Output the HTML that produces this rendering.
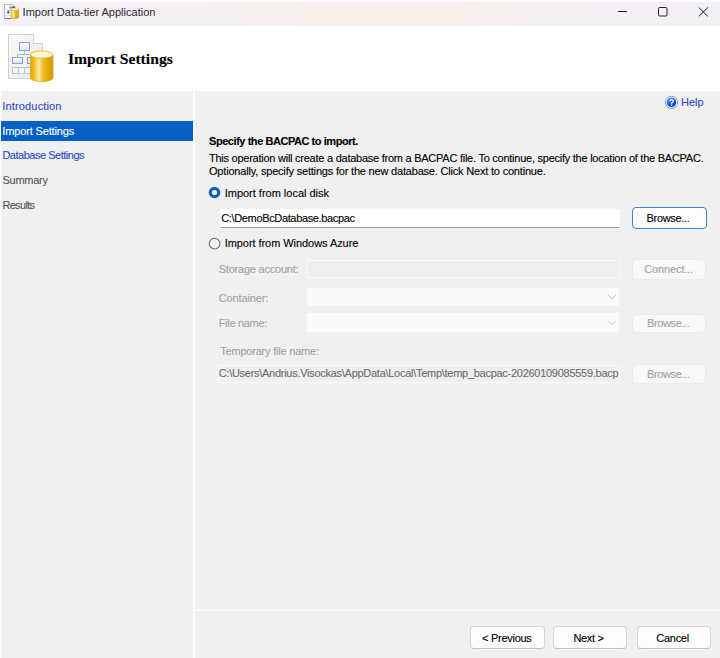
<!DOCTYPE html>
<html><head><meta charset="utf-8">
<style>
*{margin:0;padding:0;box-sizing:border-box}
html,body{width:720px;height:658px;overflow:hidden;background:#fff}
body{position:relative;font-family:"Liberation Sans",sans-serif;font-size:11px;color:#000}
.a{position:absolute;white-space:nowrap;line-height:11px;-webkit-text-stroke:0.12px currentColor}
#titlebar{position:absolute;left:1px;top:2px;width:719px;height:24px;background:linear-gradient(90deg,#f3f0f7 0%,#f4f0f5 20%,#f8efea 45%,#f8efea 62%,#f4eff6 85%,#f3eff7 100%)}
#header{position:absolute;left:1px;top:26px;width:719px;height:65px;background:#fff}
#main{position:absolute;left:1px;top:91px;width:719px;height:567px;background:#f0f0f0;border-left:1px solid #f5f5f5}
#vsep{position:absolute;left:193px;top:91px;width:2px;height:567px;background:#fcfcfc}
#hsep{position:absolute;left:195px;top:609px;width:525px;height:2px;background:#f9f9f9}
#sel{position:absolute;left:1px;top:121px;width:192px;height:20px;background:#0560c6}
.btn{position:absolute;background:#fdfdfd;border:1px solid #d4d4d4;border-bottom-color:#c2c2c2;border-radius:4px}
.btnd{position:absolute;background:#f8f8f8;border:1px solid #ebebeb;border-radius:4px}
.tbx{position:absolute;background:#efefef;border:1px solid #fafafa}
.cmb{position:absolute;background:#fafafa}
</style></head><body>
<div id="titlebar"></div>
<div id="header"></div>
<div id="main"></div>
<div id="vsep"></div>
<div id="hsep"></div>
<div id="sel"></div>

<div class="tbx" style="left:220px;top:209px;width:400px;height:19px;background:#fff;border:none;border-radius:2px;border-bottom:1px solid #9a9a9a"></div>
<div class="btn" style="left:632px;top:207px;width:75px;height:22px;border:1.5px solid #3c84d8"></div>
<div class="tbx" style="left:307px;top:260px;width:313px;height:18px"></div>
<div class="btnd" style="left:632px;top:259px;width:74px;height:21px"></div>
<div class="cmb" style="left:307px;top:288px;width:312px;height:18px"></div>
<div class="cmb" style="left:307px;top:313px;width:312px;height:19px"></div>
<div class="btnd" style="left:632px;top:314px;width:74px;height:19px"></div>
<div class="tbx" style="left:218px;top:365px;width:402px;height:18px"></div>
<div class="btnd" style="left:632px;top:364px;width:74px;height:20px"></div>
<div class="btn" style="left:470px;top:626px;width:75px;height:23px"></div>
<div class="btn" style="left:553px;top:626px;width:74px;height:23px"></div>
<div class="btn" style="left:637px;top:626px;width:74px;height:23px"></div>


<!-- title icon -->
<svg style="position:absolute;left:0;top:0" width="24" height="24" viewBox="0 0 24 24">
 <defs>
  <linearGradient id="gs" x1="0" x2="1" y1="0" y2="0">
   <stop offset="0" stop-color="#e8c030"/><stop offset="0.3" stop-color="#f8eaa0"/><stop offset="0.5" stop-color="#f0c030"/><stop offset="1" stop-color="#d89800"/>
  </linearGradient>
 </defs>
 <path d="M4.5 4.5 H12.5 L15 7 V18.5 H4.5 Z" fill="#f4f6fa" stroke="#a8b4cc" stroke-width="1"/>
 <path d="M4.5 18.5 H11" stroke="#6a78a0" stroke-width="1"/>
 <rect x="6" y="6" width="3" height="5" fill="#ffffff"/>
 <path d="M7 10.3 H10.5" stroke="#8090c0" stroke-width="0.8"/>
 <circle cx="8.3" cy="12.4" r="1.1" fill="#2a3860"/>
 <rect x="9.5" y="6.5" width="3" height="2" fill="#8090b0"/>
 <rect x="12" y="6.6" width="3" height="1.8" fill="#3a4a78"/>
 <path d="M6.5 15.2 H10" stroke="#c0c8dc" stroke-width="0.8"/>
 <path d="M11 9.2 V17.3 A3.85 1.25 0 0 0 18.7 17.3 V9.2 Z" fill="url(#gs)" stroke="#c89a20" stroke-width="0.5"/>
 <ellipse cx="14.85" cy="9.2" rx="3.85" ry="1.25" fill="#fcf4c0" stroke="#d0a830" stroke-width="0.5"/>
</svg>
<!-- header icon -->
<svg style="position:absolute;left:0;top:26px" width="60" height="62" viewBox="0 26 60 62">
 <defs>
  <linearGradient id="gc" x1="0" x2="1" y1="0" y2="0">
   <stop offset="0" stop-color="#e2a800"/><stop offset="0.15" stop-color="#f0bc1c"/><stop offset="0.38" stop-color="#faeda8"/><stop offset="0.52" stop-color="#f2c434"/><stop offset="0.8" stop-color="#e2a600"/><stop offset="1" stop-color="#d29600"/>
  </linearGradient>
  <linearGradient id="gd" x1="0" x2="1" y1="0" y2="1">
   <stop offset="0" stop-color="#fafafa"/><stop offset="1" stop-color="#e8e8e8"/>
  </linearGradient>
  <linearGradient id="gb" x1="0" x2="0" y1="0" y2="1">
   <stop offset="0" stop-color="#ffffff"/><stop offset="1" stop-color="#d8e2f2"/>
  </linearGradient>
 </defs>
 <path d="M8.5 34.5 H33.5 L42.5 43.5 V78.5 H8.5 Z" fill="url(#gd)" stroke="#cfcfcf" stroke-width="1"/>
 <path d="M33.5 34.5 V43.5 H42.5" fill="#ffffff" stroke="#cfcfcf" stroke-width="1"/>
 <rect x="19.5" y="42.5" width="10" height="8" fill="url(#gb)" stroke="#8ea2c8" stroke-width="1"/>
 <path d="M24.5 50.5 V54.5 M17.5 58 V54.5 H31.5 V58" fill="none" stroke="#a8b8d8" stroke-width="1"/>
 <rect x="12.5" y="57.5" width="10" height="6" fill="url(#gb)" stroke="#8ea2c8" stroke-width="1"/>
 <rect x="27.5" y="57.5" width="10" height="6" fill="url(#gb)" stroke="#8ea2c8" stroke-width="1"/>
 <rect x="12.5" y="67.5" width="18" height="6" fill="#f2f4f8" stroke="#b8c4dc" stroke-width="1"/>
 <path d="M18.5 67.5 V73.5 M24.5 67.5 V73.5" stroke="#b8c4dc" stroke-width="1"/>
 <path d="M30.5 54.6 V78 A11.25 3.6 0 0 0 53 78 V54.6 Z" fill="url(#gc)" stroke="#d8a820" stroke-width="0.8"/>
 <ellipse cx="41.75" cy="54.6" rx="11.25" ry="3.6" fill="#fdf8d2" stroke="#dcb030" stroke-width="0.8"/>
</svg>
<!-- window controls -->
<svg style="position:absolute;left:600px;top:0" width="120" height="26" viewBox="600 0 120 26">
 <path d="M618 11.5 H627" stroke="#222" stroke-width="1"/>
 <rect x="658.5" y="7.5" width="8.5" height="8.5" rx="1.2" fill="none" stroke="#222" stroke-width="1"/>
 <path d="M698.8 7.5 L707.8 16.3 M707.8 7.5 L698.8 16.3" stroke="#222" stroke-width="1"/>
</svg>
<!-- help icon -->
<svg style="position:absolute;left:663px;top:94px" width="17" height="17" viewBox="0 0 17 17">
 <defs>
  <radialGradient id="gh" cx="0.35" cy="0.3" r="0.8">
   <stop offset="0" stop-color="#4a90ff"/><stop offset="0.55" stop-color="#1a58e0"/><stop offset="1" stop-color="#0a36b0"/>
  </radialGradient>
 </defs>
 <circle cx="8.5" cy="8.4" r="6.1" fill="#f4f8ff" stroke="#7a96cc" stroke-width="1"/>
 <circle cx="8.5" cy="8.4" r="4.7" fill="url(#gh)"/>
 <path d="M6.9 6.9 Q6.9 5.6 8.6 5.6 Q10.3 5.6 10.3 7 Q10.3 7.9 9.3 8.4 Q8.6 8.8 8.6 9.8" fill="none" stroke="#fff" stroke-width="1.2"/>
 <circle cx="8.6" cy="11.2" r="0.75" fill="#fff"/>
</svg>
<!-- radios -->
<svg style="position:absolute;left:206px;top:184px" width="18" height="70" viewBox="206 184 18 70">
 <circle cx="214.5" cy="192.5" r="5.8" fill="#0a5fc2"/>
 <circle cx="214.5" cy="192.5" r="2.5" fill="#fff"/>
 <circle cx="214.6" cy="243.7" r="5.3" fill="#f4f4f4" stroke="#6e6e6e" stroke-width="1.1"/>
</svg>
<!-- chevrons -->
<svg style="position:absolute;left:600px;top:285px" width="25" height="50" viewBox="600 285 25 50">
 <path d="M608 295 L612 299 L616 295" fill="none" stroke="#c4c4c4" stroke-width="1"/>
 <path d="M608 320.5 L612 324.5 L616 320.5" fill="none" stroke="#c4c4c4" stroke-width="1"/>
</svg>

<div class="a" style="left:22.6px;top:7.0px;letter-spacing:0.004px;color:#2a2a2a;-webkit-text-stroke:0">Import Data-tier Application</div>
<div class="a" style="left:68.4px;top:54.4px;letter-spacing:0.000px;transform:scaleX(1.0444);transform-origin:1.00px 0;font-family:'Liberation Serif',serif;font-weight:bold;font-size:15px">Import Settings</div>
<div class="a" style="left:2.3px;top:101.0px;letter-spacing:0.155px;color:#2c4cc6">Introduction</div>
<div class="a" style="left:2.3px;top:125.5px;letter-spacing:-0.143px;color:#fff">Import Settings</div>
<div class="a" style="left:2.4px;top:150.4px;letter-spacing:-0.481px;color:#2c4cc6">Database Settings</div>
<div class="a" style="left:2.4px;top:175.0px;letter-spacing:-0.233px;color:#555">Summary</div>
<div class="a" style="left:2.4px;top:199.8px;letter-spacing:-0.667px;color:#555">Results</div>
<div class="a" style="left:681.0px;top:97.0px;letter-spacing:0.000px;color:#2c4cc6">Help</div>
<div class="a" style="left:209.0px;top:136.0px;letter-spacing:-0.443px;font-weight:bold">Specify the BACPAC to import.</div>
<div class="a" style="left:209.0px;top:152.7px;letter-spacing:-0.250px;color:#000">This operation will create a database from a BACPAC file. To continue, specify the location of the BACPAC.</div>
<div class="a" style="left:209.0px;top:166.0px;letter-spacing:-0.192px;color:#000">Optionally, specify settings for the new database. Click Next to continue.</div>
<div class="a" style="left:224.7px;top:187.7px;letter-spacing:-0.010px;color:#000">Import from local disk</div>
<div class="a" style="left:221.2px;top:212.5px;letter-spacing:-0.348px;color:#000">C:\DemoBcDatabase.bacpac</div>
<div class="a" style="left:646.5px;top:213.0px;letter-spacing:-0.312px;color:#000">Browse...</div>
<div class="a" style="left:224.7px;top:238.2px;letter-spacing:-0.058px;color:#000">Import from Windows Azure</div>
<div class="a" style="left:218.7px;top:263.5px;letter-spacing:-0.213px;color:#a3a3a3">Storage account:</div>
<div class="a" style="left:644.3px;top:264.3px;letter-spacing:-0.122px;color:#a3a3a3">Connect...</div>
<div class="a" style="left:218.8px;top:292.9px;letter-spacing:-0.133px;color:#a3a3a3">Container:</div>
<div class="a" style="left:218.8px;top:318.2px;letter-spacing:-0.322px;color:#a3a3a3">File name:</div>
<div class="a" style="left:647.0px;top:318.3px;letter-spacing:-0.375px;color:#a3a3a3">Browse...</div>
<div class="a" style="left:220.3px;top:345.7px;letter-spacing:-0.211px;color:#a3a3a3">Temporary file name:</div>
<div class="a" style="left:218.7px;top:367.9px;letter-spacing:-0.275px;width:400px;overflow:hidden;color:#6d6d6d">C:\Users\Andrius.Visockas\AppData\Local\Temp\temp_bacpac-20260109085559.bacp</div>
<div class="a" style="left:647.0px;top:368.5px;letter-spacing:-0.375px;color:#a3a3a3">Browse...</div>
<div class="a" style="left:482.0px;top:632.5px;letter-spacing:-0.267px;color:#000">&lt; Previous</div>
<div class="a" style="left:573.4px;top:632.5px;letter-spacing:-0.320px;color:#000">Next &gt;</div>
<div class="a" style="left:656.3px;top:632.5px;letter-spacing:-0.280px;color:#000">Cancel</div>
</body></html>
